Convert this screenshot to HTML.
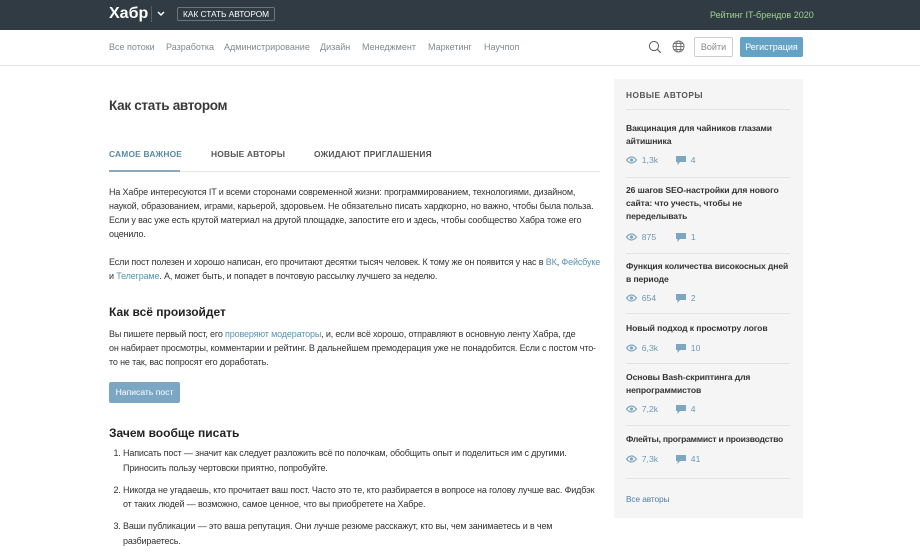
<!DOCTYPE html>
<html><head><meta charset="utf-8"><style>
*{margin:0;padding:0;box-sizing:border-box}
body{width:920px;height:545px;overflow:hidden;background:#fff;font-family:"Liberation Sans","DejaVu Sans",sans-serif;color:#333;position:relative}
.a{position:absolute;white-space:nowrap}
.top{position:absolute;left:0;top:0;width:920px;height:30px;background:#303b44}
.nav{font-size:9px;color:#7f8a93}
p.t{position:absolute;left:109px;font-size:9px;letter-spacing:-0.15px;line-height:14px;color:#333;white-space:nowrap}
a{color:#5a92b3;text-decoration:none}
.side{position:absolute;left:614px;top:79px;width:189px;height:439px;background:#f5f5f5}
.st{position:absolute;left:12px;font-size:8.6px;letter-spacing:-0.1px;font-weight:bold;color:#333;line-height:13px;white-space:nowrap}
.sv{position:absolute;left:12px;font-size:8.6px;color:#6a97b5;display:flex;align-items:center}
.sep{position:absolute;left:12px;width:164px;height:1px;background:#e3e3e3}
.tab{font-size:8.4px;font-weight:bold;letter-spacing:.2px}
ol{position:absolute;left:123px;top:446px;font-size:9px;letter-spacing:-0.15px;line-height:14.5px;color:#333;white-space:nowrap}
li{margin-bottom:7.5px}
</style></head><body>
<div class="top"></div>
<div class="a" style="left:109px;top:5px;font-size:16px;font-weight:bold;color:#fff">Хабр</div>
<div class="a" style="left:151px;top:6px;width:1px;height:16px;background:#55626b"></div>
<svg class="a" style="left:157px;top:11px" width="8" height="6" viewBox="0 0 8 6"><path d="M1 1l3 3 3-3" stroke="#fff" stroke-width="1.5" fill="none"/></svg>
<div class="a" style="left:177px;top:7px;height:14px;border:1px solid #6b767e;border-radius:2px;padding:0 5px;font-size:8.3px;line-height:12px;color:#fff">КАК СТАТЬ АВТОРОМ</div>
<div class="a" style="left:710px;top:10px;font-size:9px;color:#9fd48d">Рейтинг IT-брендов 2020</div>

<div class="a nav" style="left:109px;top:42px">Все потоки</div>
<div class="a nav" style="left:166px;top:42px">Разработка</div>
<div class="a nav" style="left:224px;top:42px">Администрирование</div>
<div class="a nav" style="left:320px;top:42px">Дизайн</div>
<div class="a nav" style="left:362px;top:42px">Менеджмент</div>
<div class="a nav" style="left:428px;top:42px">Маркетинг</div>
<div class="a nav" style="left:484px;top:42px">Научпоп</div>
<svg class="a" style="left:648px;top:40px" width="14" height="14" viewBox="0 0 14 14"><circle cx="6" cy="6" r="4.6" stroke="#666" stroke-width="1.1" fill="none"/><path d="M9.4 9.4l3.4 3.4" stroke="#666" stroke-width="1.2"/></svg>
<svg class="a" style="left:672px;top:40px" width="13" height="13" viewBox="0 0 13 13" fill="none" stroke="#777" stroke-width="1"><circle cx="6.5" cy="6.5" r="5.5"/><ellipse cx="6.5" cy="6.5" rx="2.4" ry="5.5"/><path d="M1 6.5h11M2 3.5h9M2 9.5h9"/></svg>
<div class="a" style="left:694px;top:37px;width:39px;height:20px;border:1px solid #ccc;border-radius:2px;font-size:9px;color:#888;text-align:center;line-height:18px">Войти</div>
<div class="a" style="left:740px;top:37px;width:63px;height:20px;background:#65a3c6;border-radius:2px;font-size:9px;color:#fff;text-align:center;line-height:20px">Регистрация</div>
<div class="a" style="left:0;top:65px;width:920px;height:1px;background:#e3e6e8"></div>

<div class="a" style="left:109px;top:98px;font-size:13.5px;font-weight:bold;letter-spacing:-0.3px;color:#3a3a3a">Как стать автором</div>
<div class="a tab" style="left:109px;top:149px;color:#5b89a8">САМОЕ ВАЖНОЕ</div>
<div class="a tab" style="left:211px;top:149px;color:#555">НОВЫЕ АВТОРЫ</div>
<div class="a tab" style="left:314px;top:149px;color:#555">ОЖИДАЮТ ПРИГЛАШЕНИЯ</div>
<div class="a" style="left:109px;top:171px;width:491px;height:1px;background:#e3e6e8"></div>
<div class="a" style="left:109px;top:170px;width:71px;height:2px;background:#8aa9bf"></div>

<p class="t" style="top:185px">На Хабре интересуются IT и всеми сторонами современной жизни: программированием, технологиями, дизайном,<br>наукой, образованием, играми, карьерой, здоровьем. Не обязательно писать хардкорно, но важно, чтобы была польза.<br>Если у вас уже есть крутой материал на другой площадке, запостите его и здесь, чтобы сообщество Хабра тоже его<br>оценило.</p>
<p class="t" style="top:255px">Если пост полезен и хорошо написан, его прочитают десятки тысяч человек. К тому же он появится у нас в <a>ВК</a>, <a>Фейсбуке</a><br>и <a>Телеграме</a>. А, может быть, и попадет в почтовую рассылку лучшего за неделю.</p>
<div class="a" style="left:109px;top:305px;font-size:12px;font-weight:bold;color:#222">Как всё произойдет</div>
<p class="t" style="top:327px">Вы пишете первый пост, его <a>проверяют модераторы</a>, и, если всё хорошо, отправляют в основную ленту Хабра, где<br>он набирает просмотры, комментарии и рейтинг. В дальнейшем премодерация уже не понадобится. Если с постом что-<br>то не так, вас попросят его доработать.</p>
<div class="a" style="left:109px;top:382px;width:71px;height:21px;background:#7ba7c4;border-radius:2px;font-size:8.6px;color:#fff;text-align:center;line-height:21px">Написать пост</div>
<div class="a" style="left:109px;top:426px;font-size:12px;font-weight:bold;color:#222">Зачем вообще писать</div>
<ol>
<li>Написать пост — значит как следует разложить всё по полочкам, обобщить опыт и поделиться им с другими.<br>Приносить пользу чертовски приятно, попробуйте.</li>
<li>Никогда не угадаешь, кто прочитает ваш пост. Часто это те, кто разбирается в вопросе на голову лучше вас. Фидбэк<br>от таких людей — возможно, самое ценное, что вы приобретете на Хабре.</li>
<li>Ваши публикации — это ваша репутация. Они лучше резюме расскажут, кто вы, чем занимаетесь и в чем<br>разбираетесь.</li>
</ol>

<div class="side">
<div class="st" style="top:10px;font-size:8.3px;color:#555;letter-spacing:.5px">НОВЫЕ АВТОРЫ</div>
<div class="sep" style="top:30px"></div>
<div class="st" style="top:43px">Вакцинация для чайников глазами<br>айтишника</div>
<div class="sv" style="top:76px"><svg width="11" height="8" viewBox="0 0 11 8"><path d="M0.5 4Q5.5-2 10.5 4Q5.5 10 0.5 4Z" fill="none" stroke="#7fa6c0" stroke-width="1.2"/><circle cx="5.5" cy="4" r="1.6" fill="#7fa6c0"/></svg>&nbsp;&nbsp;1,3k<svg style="margin-left:18px" width="10" height="9" viewBox="0 0 10 9"><path d="M0 0h10v6H4L1.5 9V6H0z" fill="#7fa6c0"/></svg>&nbsp;&nbsp;4</div>
<div class="sep" style="top:98px"></div>
<div class="st" style="top:105px">26 шагов SEO-настройки для нового<br>сайта: что учесть, чтобы не<br>переделывать</div>
<div class="sv" style="top:153px"><svg width="11" height="8" viewBox="0 0 11 8"><path d="M0.5 4Q5.5-2 10.5 4Q5.5 10 0.5 4Z" fill="none" stroke="#7fa6c0" stroke-width="1.2"/><circle cx="5.5" cy="4" r="1.6" fill="#7fa6c0"/></svg>&nbsp;&nbsp;875<svg style="margin-left:20px" width="10" height="9" viewBox="0 0 10 9"><path d="M0 0h10v6H4L1.5 9V6H0z" fill="#7fa6c0"/></svg>&nbsp;&nbsp;1</div>
<div class="sep" style="top:174px"></div>
<div class="st" style="top:181px">Функция количества високосных дней<br>в периоде</div>
<div class="sv" style="top:214px"><svg width="11" height="8" viewBox="0 0 11 8"><path d="M0.5 4Q5.5-2 10.5 4Q5.5 10 0.5 4Z" fill="none" stroke="#7fa6c0" stroke-width="1.2"/><circle cx="5.5" cy="4" r="1.6" fill="#7fa6c0"/></svg>&nbsp;&nbsp;654<svg style="margin-left:20px" width="10" height="9" viewBox="0 0 10 9"><path d="M0 0h10v6H4L1.5 9V6H0z" fill="#7fa6c0"/></svg>&nbsp;&nbsp;2</div>
<div class="sep" style="top:234px"></div>
<div class="st" style="top:243px">Новый подход к просмотру логов</div>
<div class="sv" style="top:264px"><svg width="11" height="8" viewBox="0 0 11 8"><path d="M0.5 4Q5.5-2 10.5 4Q5.5 10 0.5 4Z" fill="none" stroke="#7fa6c0" stroke-width="1.2"/><circle cx="5.5" cy="4" r="1.6" fill="#7fa6c0"/></svg>&nbsp;&nbsp;6,3k<svg style="margin-left:18px" width="10" height="9" viewBox="0 0 10 9"><path d="M0 0h10v6H4L1.5 9V6H0z" fill="#7fa6c0"/></svg>&nbsp;&nbsp;10</div>
<div class="sep" style="top:284px"></div>
<div class="st" style="top:292px">Основы Bash-скриптинга для<br>непрограммистов</div>
<div class="sv" style="top:325px"><svg width="11" height="8" viewBox="0 0 11 8"><path d="M0.5 4Q5.5-2 10.5 4Q5.5 10 0.5 4Z" fill="none" stroke="#7fa6c0" stroke-width="1.2"/><circle cx="5.5" cy="4" r="1.6" fill="#7fa6c0"/></svg>&nbsp;&nbsp;7,2k<svg style="margin-left:18px" width="10" height="9" viewBox="0 0 10 9"><path d="M0 0h10v6H4L1.5 9V6H0z" fill="#7fa6c0"/></svg>&nbsp;&nbsp;4</div>
<div class="sep" style="top:346px"></div>
<div class="st" style="top:354px;letter-spacing:-0.25px">Флейты, программист и производство</div>
<div class="sv" style="top:375px"><svg width="11" height="8" viewBox="0 0 11 8"><path d="M0.5 4Q5.5-2 10.5 4Q5.5 10 0.5 4Z" fill="none" stroke="#7fa6c0" stroke-width="1.2"/><circle cx="5.5" cy="4" r="1.6" fill="#7fa6c0"/></svg>&nbsp;&nbsp;7,3k<svg style="margin-left:18px" width="10" height="9" viewBox="0 0 10 9"><path d="M0 0h10v6H4L1.5 9V6H0z" fill="#7fa6c0"/></svg>&nbsp;&nbsp;41</div>
<div class="sep" style="top:399px"></div>
<div class="st" style="top:414px;font-size:8.3px;font-weight:normal;color:#4f7fa3">Все авторы</div>
</div>
</body></html>
